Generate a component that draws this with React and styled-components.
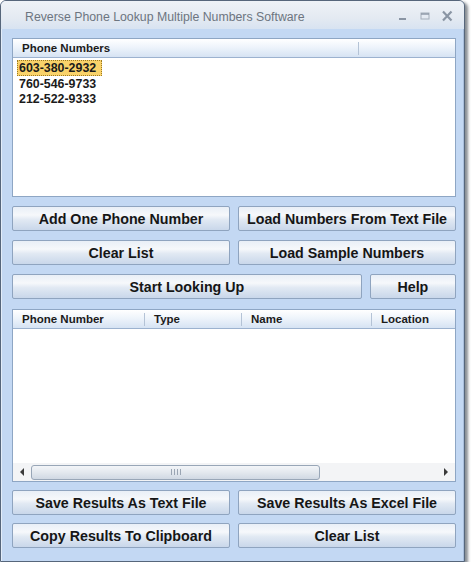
import React from 'react'
import styled, { createGlobalStyle } from 'styled-components';

const GlobalStyle = createGlobalStyle`
  html, body {
    margin: 0;
    background: #fff;
  }
  body {
    font-family: 'Liberation Sans', Arial, sans-serif;
    color: #1b1b1b;
  }
`;

const Window = styled.div`
  width: 465px;
  height: 562px;
  box-sizing: border-box;
  border: 1px solid #56667b;
  border-radius: 6px 6px 0 0;
  background: #c3d8f3;
  box-shadow: 3px 2px 3px rgba(40, 50, 60, 0.55), inset 1px 0 0 #e3edf9, inset -1px 0 0 #a9bedb;
  display: flex;
  flex-direction: column;
  overflow: hidden;
`;

const TitleBar = styled.div`
  height: 28px;
  flex: none;
  display: flex;
  align-items: center;
  padding-left: 24px;
  padding-right: 10px;
  background: linear-gradient(#eef2f7, #e4eaf2 60%, #d8e3f1);

  span {
    flex: 1;
    font-size: 12.3px;
    color: #6d7580;
    padding-top: 4px;
  }
`;

const Controls = styled.div`
  display: flex;
  align-items: center;
  gap: 10px;
  padding-top: 2px;
  color: #8a95a4;
`;

const Body = styled.div`
  flex: 1;
  display: flex;
  flex-direction: column;
  gap: 9px;
  padding: 9px 8px 11px 11px;
`;

const ListBox = styled.div`
  height: ${props => props.height}px;
  margin-top: ${props => props.offset || 0}px;
  flex: none;
  box-sizing: border-box;
  border: 1px solid #8ea6c4;
  background: #fff;
  display: flex;
  flex-direction: column;
`;

const Header = styled.div`
  height: 19px;
  flex: none;
  display: flex;
  background: linear-gradient(#ffffff, #eef4fb 45%, #d6e3f3);
  border-bottom: 1px solid #9cb2cf;
  box-sizing: border-box;
`;

const Column = styled.div`
  width: ${props => props.width ? props.width + 'px' : 'auto'};
  flex: ${props => props.width ? 'none' : '1'};
  box-sizing: border-box;
  padding-left: 9px;
  font-size: 11.5px;
  font-weight: bold;
  line-height: 18px;
  position: relative;

  &:not(:last-child)::after {
    content: '';
    position: absolute;
    right: 0;
    top: 3px;
    bottom: 2px;
    width: 1px;
    background: #b4c3d6;
  }
`;

const Items = styled.div`
  flex: 1;
  padding: 2px 0 0 4px;
`;

const Item = styled.div`
  width: fit-content;
  box-sizing: border-box;
  height: 15.5px;
  padding: 0 5px 0 1px;
  font-size: 12.4px;
  font-weight: bold;
  line-height: 14px;
  border: 1px solid transparent;
  ${props => props.selected && `
    background: #f9d26a;
    border: 1px dotted #9c7a22;
  `}
`;

const Lower = styled.div`
  display: flex;
  flex-direction: column;
  gap: 8px;
  margin-top: -1px;
`;

const Row = styled.div`
  display: flex;
  gap: 8px;
  height: 25px;
  flex: none;
`;

const Button = styled.button`
  flex: ${props => props.grow || 1};
  width: 0;
  height: 25px;
  box-sizing: border-box;
  border: 1px solid #8fa4bf;
  border-radius: 2px;
  background: linear-gradient(#e9eff7, #f6f8fb 35%, #e1e9f3 55%, #c9d7ea);
  font-family: 'Liberation Sans', Arial, sans-serif;
  font-size: 14.25px;
  font-weight: bold;
  color: #161616;
  padding: 0;
  white-space: nowrap;
`;

const Results = styled.div`
  flex: 1;
`;

const ScrollBar = styled.div`
  height: 18px;
  flex: none;
  display: flex;
  align-items: center;
  background: #f3f4f6;
`;

const Arrow = styled.div`
  width: 18px;
  height: 18px;
  display: flex;
  align-items: center;
  justify-content: center;

  &::before {
    content: '';
    border-top: 4px solid transparent;
    border-bottom: 4px solid transparent;
    ${props => props.right
      ? 'border-left: 4px solid #3a3a3a;'
      : 'border-right: 4px solid #3a3a3a;'}
  }
`;

const Track = styled.div`
  flex: 1;
  height: 100%;
  display: flex;
  align-items: center;
`;

const Thumb = styled.div`
  width: 289px;
  height: 15px;
  box-sizing: border-box;
  border: 1px solid #98a6b7;
  border-radius: 3px;
  background: linear-gradient(#f3f5f8, #e3e8ee 50%, #d0d8e3);
  display: flex;
  align-items: center;
  justify-content: center;
  gap: 2px;

  i {
    width: 1px;
    height: 6px;
    background: #9aa5b3;
  }
`;

function WindowControls() {
  return (
    <Controls>
      <svg width="12" height="12" viewBox="0 0 12 12">
        <rect x="2" y="8" width="7" height="2" fill="currentColor" />
      </svg>
      <svg width="12" height="12" viewBox="0 0 12 12">
        <rect x="2" y="3" width="8" height="6" fill="none" stroke="currentColor" strokeWidth="1" opacity="0.7" />
        <rect x="2" y="3" width="8" height="2" fill="currentColor" opacity="0.7" />
      </svg>
      <svg width="13" height="12" viewBox="0 0 13 12">
        <path d="M2 1.5 L10.5 10.5 M10.5 1.5 L2 10.5" stroke="currentColor" strokeWidth="2.2" />
      </svg>
    </Controls>
  )
}

const numbers = ['603-380-2932', '760-546-9733', '212-522-9333'];

function App() {
  return (
    <>
      <GlobalStyle />
      <Window>
        <TitleBar>
          <span>Reverse Phone Lookup Multiple Numbers Software</span>
          <WindowControls />
        </TitleBar>
        <Body>
          <ListBox height={159}>
            <Header>
              <Column width={346}>Phone Numbers</Column>
              <Column />
            </Header>
            <Items>
              {numbers.map((n, i) => (
                <Item key={n} selected={i === 0}>{n}</Item>
              ))}
            </Items>
          </ListBox>
          <Row>
            <Button>Add One Phone Number</Button>
            <Button>Load Numbers From Text File</Button>
          </Row>
          <Row>
            <Button>Clear List</Button>
            <Button>Load Sample Numbers</Button>
          </Row>
          <Row>
            <Button grow={351}>Start Looking Up</Button>
            <Button grow={85}>Help</Button>
          </Row>
          <ListBox height={173} offset={1}>
            <Header>
              <Column width={132}>Phone Number</Column>
              <Column width={97}>Type</Column>
              <Column width={130}>Name</Column>
              <Column>Location</Column>
            </Header>
            <Results />
            <ScrollBar>
              <Arrow />
              <Track>
                <Thumb><i /><i /><i /><i /></Thumb>
              </Track>
              <Arrow right />
            </ScrollBar>
          </ListBox>
          <Lower>
            <Row>
              <Button>Save Results As Text File</Button>
              <Button>Save Results As Excel File</Button>
            </Row>
            <Row>
              <Button>Copy Results To Clipboard</Button>
              <Button>Clear List</Button>
            </Row>
          </Lower>
        </Body>
      </Window>
    </>
  )
}

export default App
